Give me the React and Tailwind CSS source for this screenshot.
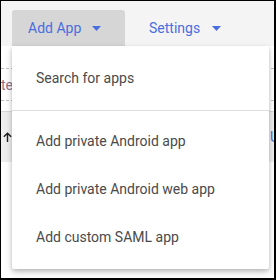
import React from 'react';

const Caret = () => (
    <svg width="9" height="5" viewBox="0 0 9 5" className="shrink-0">
        <path d="M0 0 L9 0 L4.5 5 Z" fill="#4a6ee0" />
    </svg>
);

const ArrowUp = () => (
    <svg width="9" height="10" viewBox="0 0 9 10" className="shrink-0">
        <path d="M4.5 10 V1.2 M0.8 4.8 L4.5 1.2 L8.2 4.8" stroke="#1e1e1e" strokeWidth="1.4" fill="none" />
    </svg>
);

const menuItems = [
    'Add private Android app',
    'Add private Android web app',
    'Add custom SAML app'
];

const App = () => {
    return (
        <div className="w-[276px] h-[280px] bg-white border-black border-l border-t border-r-2 border-b-2 overflow-hidden font-['Roboto',sans-serif]">
            <div className="relative w-full h-full overflow-hidden">
                {/* top bar */}
                <div className="h-[45px] bg-[#f4f4f4] flex items-end pl-[11px]">
                    <button className="h-[36px] w-[113px] bg-[#d6d6d6] rounded-t-[3px] flex items-center pl-[16px] text-[14px] text-[#4a6ee0]">
                        <span>Add App</span>
                        <span className="ml-[11px] mt-[1px]"><Caret /></span>
                    </button>
                    <button className="h-[36px] flex items-center ml-[24px] text-[14px] text-[#4a6ee0]">
                        <span>Settings</span>
                        <span className="ml-[12px] mt-[1px]"><Caret /></span>
                    </button>
                </div>

                {/* page content under the menu */}
                <div className="pt-[22px]">
                    <div className="h-[33px] border-y border-dashed border-[#bdbdbd] flex items-center">
                        <span className="text-[14px] text-[#8d6e86] leading-none">te</span>
                    </div>
                    <div className="h-[10px]" />
                    <div className="h-[51px] border-t border-[#d8d8d8] bg-[#eeeeee] flex items-center justify-between pl-[2px]">
                        <ArrowUp />
                        <span className="text-[14px] text-[#4a6ee0] leading-none w-[4px] overflow-hidden">U</span>
                    </div>
                </div>

                {/* dropdown menu */}
                <div className="absolute left-[11px] top-[45px] w-[257px] bg-white rounded-b-[2px] shadow-[0_2px_4px_rgba(0,0,0,0.2),0_4px_10px_rgba(0,0,0,0.12)] pt-[8px] pb-[8px] text-[14px] text-[#4a4a4a]">
                    <div className="h-[48px] flex items-center pl-[24px]">Search for apps</div>
                    <div className="mt-[8px] mb-[6px] h-px bg-[#dcdcdc]" />
                    {menuItems.map((label) => (
                        <div key={label} className="h-[48px] flex items-center pl-[24px]">
                            {label}
                        </div>
                    ))}
                </div>
            </div>
        </div>
    );
};

export default App;
